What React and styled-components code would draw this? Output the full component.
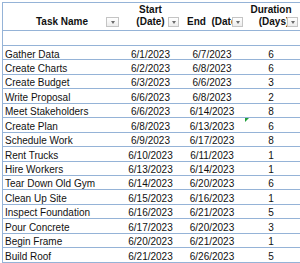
import React from 'react';
import styled, { createGlobalStyle } from 'styled-components';

const GlobalStyle = createGlobalStyle`
  html, body {
    margin: 0;
    padding: 0;
    background: #ffffff;
  }
  body {
    font-family: 'Liberation Sans', Arial, sans-serif;
    color: #111;
  }
`;

const LINE = '#95b3d7';

const Table = styled.div`
  margin: 2px 0 0 2px;
  border-top: 1px solid ${LINE};
  border-left: 1px solid ${LINE};
  width: 298px;
`;

const Row = styled.div`
  display: grid;
  grid-template-columns: 118px 59px 64px 54px 1fr;
  height: ${p => p.h}px;
  box-sizing: border-box;
  border-bottom: 1px solid ${LINE};
`;

const HeadCell = styled.div`
  position: relative;
  display: flex;
  flex-direction: column;
  justify-content: flex-end;
  align-items: ${p => (p.left ? 'flex-start' : 'center')};
  padding: 0 0 2px ${p => p.pad || 0}px;
  overflow: hidden;
  font-size: 10px;
  font-weight: bold;
  line-height: 12px;
  white-space: nowrap;
`;

const HeadLine = styled.span`
  margin-left: ${p => p.shift || 0}px;
`;

const Filter = styled.span`
  position: absolute;
  right: ${p => p.right ?? 1}px;
  bottom: 3px;
  width: ${p => p.w || 11}px;
  height: 10px;
  box-sizing: border-box;
  border: 1px solid #c4c4c4;
  background: linear-gradient(#ffffff, #ececec);
  display: flex;
  align-items: center;
  justify-content: center;

  &::after {
    content: '';
    border-left: 2.5px solid transparent;
    border-right: 2.5px solid transparent;
    border-top: 3px solid #6b6b6b;
  }
`;

const Cell = styled.div`
  position: relative;
  font-size: 10px;
  line-height: 13px;
  padding-top: 1.5px;
  padding-left: ${p => (p.center ? 0 : 2)}px;
  text-align: ${p => (p.center ? 'center' : 'left')};
  white-space: nowrap;
`;

const ErrorMark = styled.span`
  position: absolute;
  left: 1px;
  top: 0;
  border-top: 4px solid #1e9e3a;
  border-right: 4px solid transparent;
`;

const tasks = [
  ['Gather Data', '6/1/2023', '6/7/2023', 6],
  ['Create Charts', '6/2/2023', '6/8/2023', 6],
  ['Create Budget', '6/3/2023', '6/6/2023', 3],
  ['Write Proposal', '6/6/2023', '6/8/2023', 2],
  ['Meet Stakeholders', '6/6/2023', '6/14/2023', 8],
  ['Create Plan', '6/8/2023', '6/13/2023', 6],
  ['Schedule Work', '6/9/2023', '6/17/2023', 8],
  ['Rent Trucks', '6/10/2023', '6/11/2023', 1],
  ['Hire Workers', '6/13/2023', '6/14/2023', 1],
  ['Tear Down Old Gym', '6/14/2023', '6/20/2023', 6],
  ['Clean Up Site', '6/15/2023', '6/16/2023', 1],
  ['Inspect Foundation', '6/16/2023', '6/21/2023', 5],
  ['Pour Concrete', '6/17/2023', '6/20/2023', 3],
  ['Begin Frame', '6/20/2023', '6/21/2023', 1],
  ['Build Roof', '6/21/2023', '6/26/2023', 5],
];

export default function App() {
  return (
    <>
      <GlobalStyle />
      <Table>
        <Row h={28}>
          <HeadCell>
            <HeadLine>Task Name</HeadLine>
            <Filter right={2} w={13} />
          </HeadCell>
          <HeadCell>
            <HeadLine>Start</HeadLine>
            <HeadLine>(Date)</HeadLine>
            <Filter />
          </HeadCell>
          <HeadCell left pad={7}>
            <HeadLine>End&nbsp;&nbsp;(Date)</HeadLine>
            <Filter />
          </HeadCell>
          <HeadCell>
            <HeadLine>Duration</HeadLine>
            <HeadLine shift={6}>(Days)</HeadLine>
            <Filter right={0} />
          </HeadCell>
          <div />
        </Row>
        <Row h={15} />
        {tasks.map(([name, start, end, days]) => (
          <Row key={name} h={14.45}>
            <Cell>{name}</Cell>
            <Cell center>{start}</Cell>
            <Cell center>{end}</Cell>
            <Cell center>
              {name === 'Create Plan' && <ErrorMark />}
              {days}
            </Cell>
            <div />
          </Row>
        ))}
      </Table>
    </>
  );
}
